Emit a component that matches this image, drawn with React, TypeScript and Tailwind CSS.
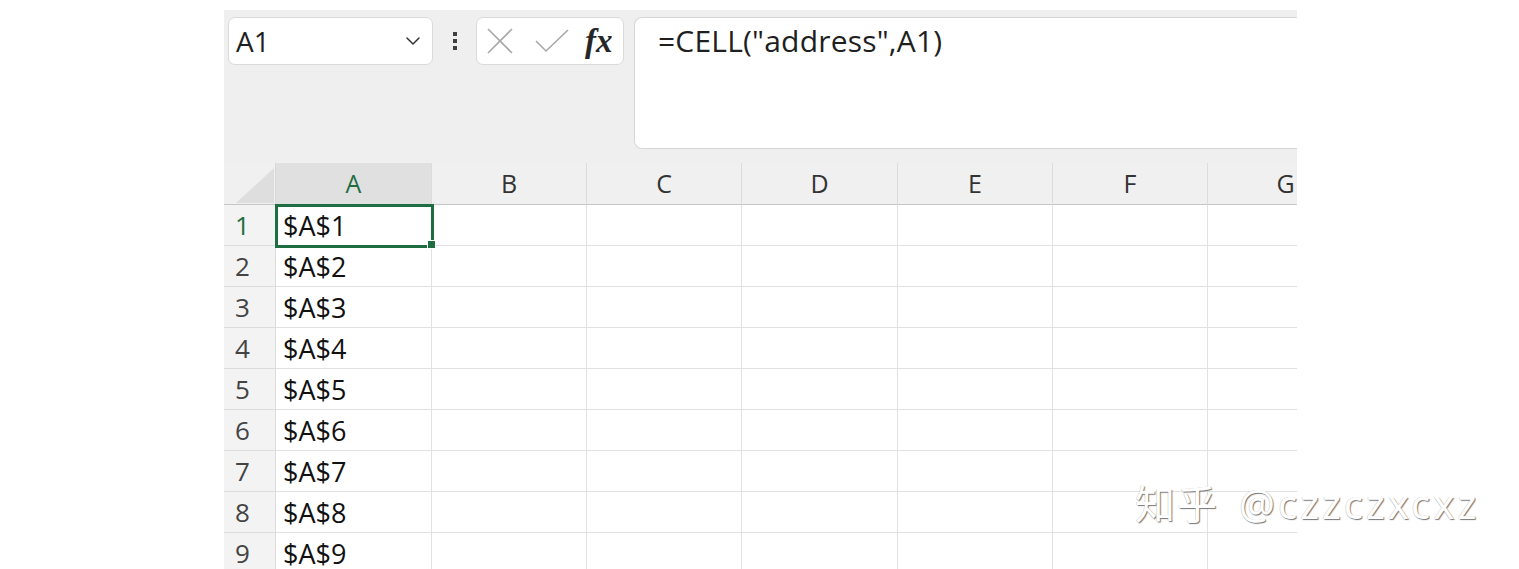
import React from 'react';
import { ChevronDown } from 'lucide-react';

const columns = ['A', 'B', 'C', 'D', 'E', 'F', 'G'];
const rows = [1, 2, 3, 4, 5, 6, 7, 8, 9];

const font = { fontFamily: '"Open Sans", "Noto Sans", sans-serif' };

const FormulaBar: React.FC = () => (
    <div className="flex h-[153px] items-start bg-[#efefef] pt-[7px] pl-[4px]">
        <div className="flex h-[48px] w-[205px] items-center justify-between rounded-[7px] border border-[#dadada] bg-white pl-[7px] pr-[7px]">
            <span className="text-[28px] leading-none text-[#1f1f1f]">A1</span>
            <ChevronDown size={24} strokeWidth={1.5} className="text-[#333]" />
        </div>
        <div className="flex h-[48px] w-[43px] flex-col items-center justify-center gap-[3px]">
            <span className="h-[4px] w-[4px] bg-[#404040]" />
            <span className="h-[4px] w-[4px] bg-[#404040]" />
            <span className="h-[4px] w-[4px] bg-[#404040]" />
        </div>
        <div className="flex h-[48px] w-[148px] items-center rounded-[7px] border border-[#dadada] bg-white pl-[9px]">
            <svg width="28" height="28" viewBox="0 0 28 28" className="mr-[21px]">
                <path d="M2 2 L26 26 M26 2 L2 26" stroke="#a8a8a8" strokeWidth="1.6" fill="none" />
            </svg>
            <svg width="34" height="24" viewBox="0 0 34 24" className="mr-[16px]">
                <path d="M1 12 L11 22 L33 1" stroke="#a8a8a8" strokeWidth="1.6" fill="none" />
            </svg>
            <span
                className="text-[33px] font-semibold italic leading-none text-[#262626]"
                style={{ fontFamily: '"Liberation Serif", "DejaVu Serif", serif' }}
            >
                fx
            </span>
        </div>
        <div className="ml-[10px] flex h-[132px] flex-1 rounded-l-[8px] border border-r-0 border-[#d6d6d6] bg-white pl-[23px] pt-[8px]">
            <span className="text-[30px] leading-none tracking-[0.2px] text-[#1f1f1f]">=CELL("address",A1)</span>
        </div>
    </div>
);

const Grid: React.FC = () => (
    <div className="relative grid w-max grid-cols-[52px_156px_155px_155px_156px_155px_155px_156px]">
        {/* header row */}
        <div className="relative h-[42px] border-b border-r border-[#c6c6c6] border-r-[#d8d8d8] bg-[#f0f0f0]">
            <svg width="52" height="41" viewBox="0 0 52 41" className="absolute left-0 top-0">
                <polygon points="12,40 50,40 50,5" fill="#dedede" />
            </svg>
        </div>
        {columns.map((c) => (
            <div
                key={c}
                className={
                    'flex h-[42px] items-center justify-center border-b border-r border-[#c6c6c6] border-r-[#dcdcdc] text-[25px] leading-none ' +
                    (c === 'A' ? 'bg-[#e0e0e0] text-[#1e6e42]' : 'bg-[#f0f0f0] text-[#333]')
                }
            >
                {c}
            </div>
        ))}
        {rows.map((r) => (
            <React.Fragment key={r}>
                <div
                    className={
                        'flex h-[41px] items-center justify-center border-b border-r border-[#dcdcdc] bg-[#f3f3f3] pr-[14px] text-[26px] leading-none ' +
                        (r === 1 ? 'text-[#1e6e42]' : 'text-[#444]')
                    }
                >
                    {r}
                </div>
                {columns.map((c) => (
                    <div
                        key={c}
                        className="flex h-[41px] items-center border-b border-r border-[#e1e1e1] bg-white pl-[7px] text-[27px] leading-none text-[#111]"
                    >
                        {c === 'A' ? `$A$${r}` : ''}
                    </div>
                ))}
            </React.Fragment>
        ))}
        {/* active cell A1 selection */}
        <div className="pointer-events-none absolute left-[51px] top-[41px] z-10 h-[44px] w-[159px] border-[3px] border-[#1e6e42]" />
        <div className="pointer-events-none absolute left-[203px] top-[77px] z-20 h-[9px] w-[9px] border border-white bg-[#1e6e42]" />
    </div>
);

export default function App() {
    return (
        <div className="relative h-[569px] w-full overflow-hidden bg-white" style={font}>
            <div className="ml-[224px] mt-[10px] w-[1073px] overflow-hidden">
                <FormulaBar />
                <Grid />
            </div>
            <div
                className="absolute left-[1135px] top-[484px] flex items-center text-[40px] leading-none text-white"
                style={{
                    fontFamily: '"Noto Sans", "Noto Sans CJK SC", sans-serif',
                    textShadow: '1px 1px 1px rgba(60,60,60,0.7), -0.5px -0.5px 0 rgba(120,120,120,0.4)',
                }}
            >
                <span className="mr-[20px] tracking-[2px]">知乎</span>
                <span className="tracking-[3px]">@czzczxcxz</span>
            </div>
        </div>
    );
}
